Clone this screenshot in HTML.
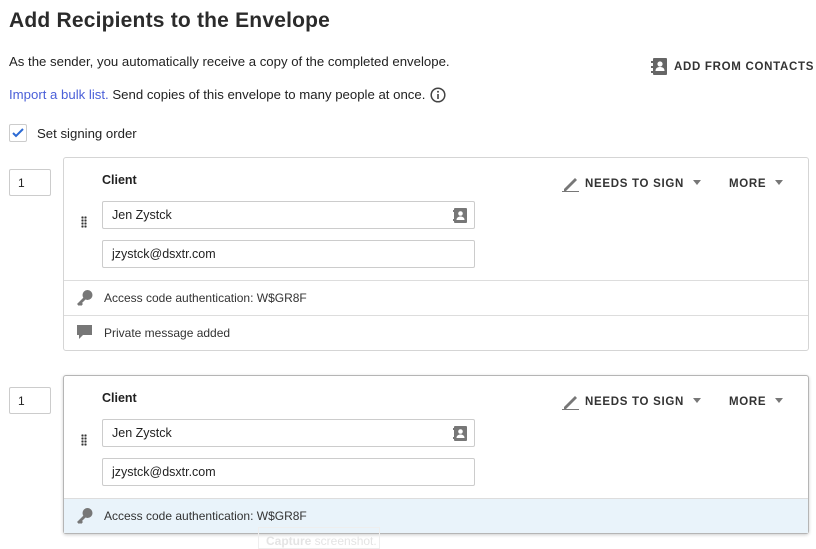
<!DOCTYPE html>
<html><head><style>
*{margin:0;padding:0;box-sizing:border-box}
body{width:816px;height:547px;background:#fff;font-family:"Liberation Sans",sans-serif;color:#222;position:relative;overflow:hidden;font-size:13.2px}
.a{position:absolute;white-space:nowrap}
h1{position:absolute;left:9px;top:9px;font-size:21px;font-weight:bold;color:#2b2b2b;letter-spacing:0.2px}
.num{position:absolute;left:9px;width:42px;height:27px;border:1px solid #ccc;border-radius:2px;padding:6px 8px;font-size:12px}
.card{position:absolute;left:63px;width:746px;border:1px solid #d5d5d5;border-radius:3px;background:#fff}
.inp{position:absolute;left:38px;width:373px;height:28px;border:1px solid #ccc;border-radius:2px;padding:6px 9px;font-size:12.5px}
.cap{font-weight:bold;font-size:11.5px;letter-spacing:0.7px;color:#333}
.row{position:absolute;left:0;right:0;height:35px;border-top:1px solid #ddd;padding:10px 0 0 40px;font-size:12px;color:#333}
.tri{display:inline-block;width:0;height:0;border-left:4px solid transparent;border-right:4px solid transparent;border-top:5px solid #777;margin-left:9px;vertical-align:2px}
.dots{position:absolute;left:17px;width:6px;height:12px;background:radial-gradient(circle,#333 1px,transparent 1.3px) 0 0/3px 3px}
</style></head><body>
<h1>Add Recipients to the Envelope</h1>
<div class="a" style="left:9px;top:54px">As the sender, you automatically receive a copy of the completed envelope.</div>
<div class="a" style="left:9px;top:87px"><span style="color:#4a5fd8">Import a bulk list.</span> Send copies of this envelope to many people at once.</div>
<svg class="a" style="left:430px;top:87px" width="16" height="16"><circle cx="8" cy="8" r="6.8" fill="none" stroke="#444" stroke-width="1.5"/><rect x="7.2" y="7" width="1.6" height="5" fill="#444"/><circle cx="8" cy="4.8" r="1" fill="#444"/></svg>
<div class="a" style="left:9px;top:124px;width:18px;height:18px;border:1px solid #ccc;border-radius:2px"></div>
<svg class="a" style="left:11px;top:127px" width="14" height="12"><path d="M2 6l3 3 7-7" fill="none" stroke="#2b6ad4" stroke-width="2"/></svg>
<div class="a" style="left:37px;top:126px">Set signing order</div>
<svg class="a" style="left:651px;top:58px" width="16" height="17"><rect x="2" y="0" width="14" height="17" rx="1" fill="#666"/><rect x="0" y="3" width="3" height="2" fill="#666"/><rect x="0" y="8" width="3" height="2" fill="#666"/><rect x="0" y="13" width="3" height="2" fill="#666"/><circle cx="9" cy="6" r="2.6" fill="#fff"/><path d="M4.5 13c0-3 2-4 4.5-4s4.5 1 4.5 4z" fill="#fff"/></svg>
<div class="a cap" style="left:674px;top:61px">ADD FROM CONTACTS</div>

<div class="num" style="top:169px">1</div>
<div class="card" style="top:157px;height:194px">
 <div class="a" style="left:38px;top:15px;font-weight:bold;font-size:12.5px">Client</div>
 <svg class="a" style="left:498px;top:18px" width="18" height="16"><path d="M2 13L13 2l2 2L4 15H2z" fill="#777"/><rect x="0" y="15" width="17" height="1" fill="#777"/></svg>
 <div class="a cap" style="left:521px;top:20px">NEEDS TO SIGN<span class="tri"></span></div>
 <div class="a cap" style="left:665px;top:20px">MORE<span class="tri"></span></div>
 <div class="dots" style="top:58px"></div>
 <div class="inp" style="top:43px">Jen Zystck<svg class="a" style="right:7px;top:6px" width="14" height="15"><rect x="1" y="0" width="13" height="15" rx="1" fill="#777"/><rect x="0" y="2" width="2" height="2" fill="#777"/><rect x="0" y="11" width="2" height="2" fill="#777"/><circle cx="7.5" cy="5.5" r="2.3" fill="#fff"/><path d="M3.5 12c0-2.5 2-3.5 4-3.5s4 1 4 3.5z" fill="#fff"/></svg></div>
 <div class="inp" style="top:82px">jzystck@dsxtr.com</div>
 <div class="row" style="top:122px"><svg class="a" style="left:12px;top:8px" width="18" height="18"><circle cx="11.5" cy="6" r="5" fill="#777"/><path d="M8 8L1 15l2 2 1-1 1 1 2-2-1-1 4-4z" fill="#777"/></svg>Access code authentication: W$GR8F</div>
 <div class="row" style="top:157px;height:36px"><svg class="a" style="left:12px;top:8px" width="17" height="16"><path d="M1 1h15v10H7l-4 4v-4H1z" fill="#777"/></svg>Private message added</div>
</div>

<div class="num" style="top:387px">1</div>
<div class="card" style="top:375px;height:159px;border-color:#b5b5b5;box-shadow:0 1px 3px rgba(0,0,0,.2)">
 <div class="a" style="left:38px;top:15px;font-weight:bold;font-size:12.5px">Client</div>
 <svg class="a" style="left:498px;top:18px" width="18" height="16"><path d="M2 13L13 2l2 2L4 15H2z" fill="#777"/><rect x="0" y="15" width="17" height="1" fill="#777"/></svg>
 <div class="a cap" style="left:521px;top:20px">NEEDS TO SIGN<span class="tri"></span></div>
 <div class="a cap" style="left:665px;top:20px">MORE<span class="tri"></span></div>
 <div class="dots" style="top:58px"></div>
 <div class="inp" style="top:43px">Jen Zystck<svg class="a" style="right:7px;top:6px" width="14" height="15"><rect x="1" y="0" width="13" height="15" rx="1" fill="#777"/><rect x="0" y="2" width="2" height="2" fill="#777"/><rect x="0" y="11" width="2" height="2" fill="#777"/><circle cx="7.5" cy="5.5" r="2.3" fill="#fff"/><path d="M3.5 12c0-2.5 2-3.5 4-3.5s4 1 4 3.5z" fill="#fff"/></svg></div>
 <div class="inp" style="top:82px">jzystck@dsxtr.com</div>
 <div class="row" style="top:122px;background:#e9f3fa;height:35px"><svg class="a" style="left:12px;top:8px" width="18" height="18"><circle cx="11.5" cy="6" r="5" fill="#777"/><path d="M8 8L1 15l2 2 1-1 1 1 2-2-1-1 4-4z" fill="#777"/></svg>Access code authentication: W$GR8F</div>
</div>
<div class="a" style="left:258px;top:527px;width:122px;height:22px;border:1px solid #eee;color:#e4e4e4;font-size:12px;padding:6px 7px"><b>Capture</b> screenshot.</div>
</body></html>
